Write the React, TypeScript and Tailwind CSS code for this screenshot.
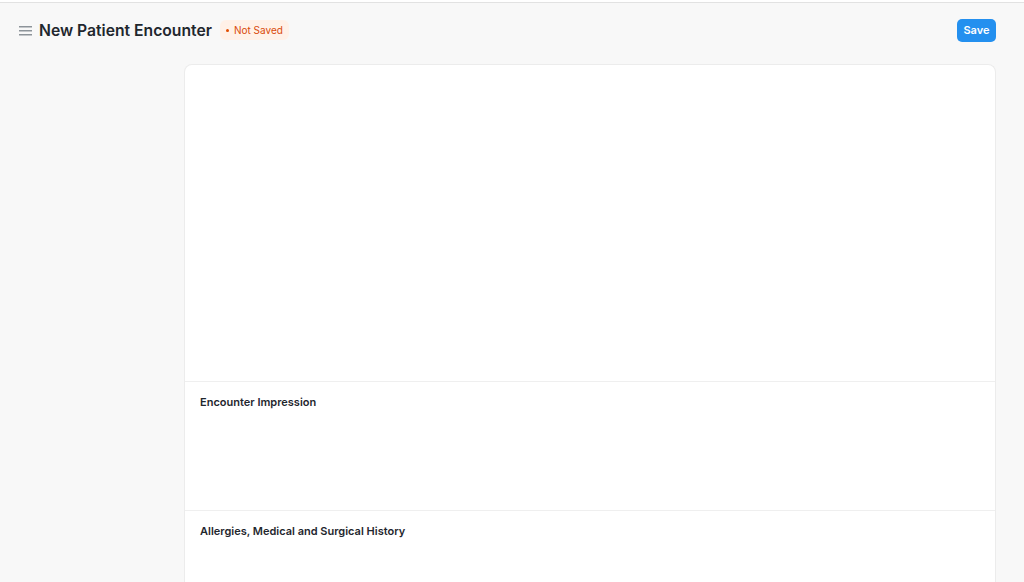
import React from "react";

export default function App() {
  return (
    <div className="min-h-[582px] bg-[#f8f8f8] flex flex-col" style={{ fontFamily: "Inter, 'Noto Sans', sans-serif" }}>
      <div className="h-[3px] bg-white border-b border-[#e2e2e2]" />
      <div className="flex items-center justify-between pl-[19px] pr-[28px] h-[55px]">
        <div className="flex items-center">
          <svg width="13" height="11" viewBox="0 0 13 11" className="mr-[7px]">
            <rect x="0" y="1" width="13" height="1.5" fill="#8d949a" />
            <rect x="0" y="5" width="13" height="1.5" fill="#8d949a" />
            <rect x="0" y="9" width="13" height="1.5" fill="#8d949a" />
          </svg>
          <h1 className="text-[15.7px] font-semibold text-[#1f272e]">New Patient Encounter</h1>
          <span className="ml-[8px] flex items-center h-[20px] px-[6px] rounded-[6px] bg-[#fff1e8] text-[#d94a0a] text-[10px]">
            <span className="w-[3px] h-[3px] rounded-full bg-[#e24c00] mr-[5px]" />
            Not Saved
          </span>
        </div>
        <button className="h-[23px] w-[39px] rounded-[5px] bg-[#2490ef] text-white text-[11px] font-semibold">Save</button>
      </div>
      <div className="flex pr-[28px] flex-1 mt-[6px]">
        <div className="w-[184px] shrink-0" />
        <div className="flex-1 bg-white border border-[#ececec] border-b-0 rounded-t-[8px] flex flex-col">
          <div className="h-[317px] border-b border-[#efefef]" />
          <div className="h-[129px] border-b border-[#efefef] px-[15px] pt-[12px]">
            <div className="text-[11px] font-semibold text-[#1f272e]">Encounter Impression</div>
          </div>
          <div className="flex-1 px-[15px] pt-[12px]">
            <div className="text-[11px] font-semibold text-[#1f272e]">Allergies, Medical and Surgical History</div>
          </div>
        </div>
      </div>
    </div>
  );
}
